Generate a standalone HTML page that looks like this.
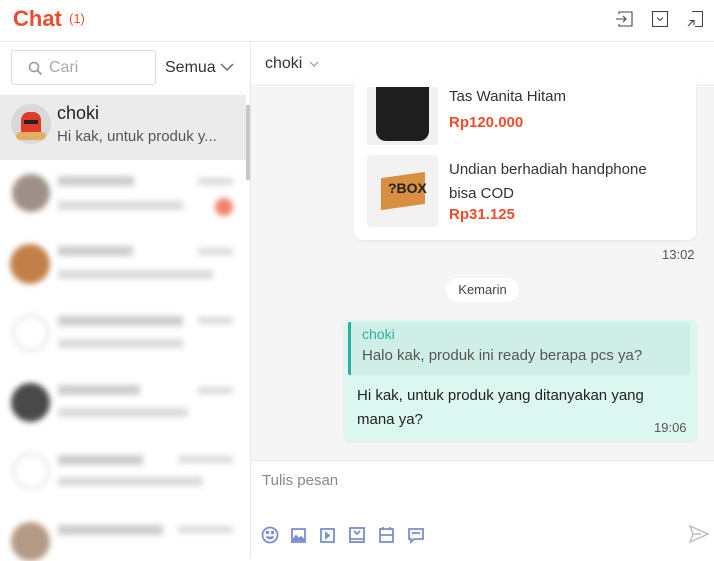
<!DOCTYPE html>
<html><head><meta charset="utf-8"><style>
*{box-sizing:border-box;margin:0;padding:0}
body{width:714px;height:558px;overflow:hidden;font-family:"Liberation Sans",sans-serif;background:#fff;position:relative;color:#333}
.a{position:absolute}
.blur{filter:blur(3px)}
</style></head><body>
<div class="a" style="left:0;top:0;width:714px;height:42px;border-bottom:1px solid #e8e8e8;background:#fff">
 <div class="a" style="left:13px;top:6px;font-size:22px;font-weight:bold;color:#ee4d2d">Chat</div>
 <div class="a" style="left:69px;top:11px;font-size:13px;color:#ee4d2d">(1)</div>
 <svg class="a" style="left:615px;top:11px" width="18" height="16" viewBox="0 0 18 16" fill="none" stroke="#444" stroke-width="1.1"><path d="M4 3V1h13v14H4v-2M1 8h10M8 5l3 3-3 3"/></svg>
 <svg class="a" style="left:652px;top:11px" width="16" height="16" viewBox="0 0 16 16" fill="none" stroke="#444" stroke-width="1.1"><rect x=".5" y=".5" width="15" height="15"/><path d="M5 6.5l3 3 3-3"/></svg>
 <svg class="a" style="left:687px;top:11px" width="16" height="16" viewBox="0 0 16 16" fill="none" stroke="#444" stroke-width="1.1"><path d="M5 .5h10.5v15H8M1 15l6-6M2.5 9.5h4.5v4.5"/></svg>
</div>
<!-- left -->
<div class="a" style="left:250px;top:43px;width:1px;height:515px;background:#e8e8e8"></div>
<div class="a" style="left:11px;top:50px;width:145px;height:35px;border:1px solid #ddd;border-radius:3px">
 <svg class="a" style="left:16px;top:10px" width="15" height="15" viewBox="0 0 15 15" fill="none" stroke="#999" stroke-width="1.6"><circle cx="6" cy="6" r="4.5"/><path d="M9.5 9.5l4 4"/></svg>
 <div class="a" style="left:37px;top:8px;font-size:16px;color:#aaa">Cari</div>
</div>
<div class="a" style="left:165px;top:59px;font-size:16px;color:#333">Semua</div>
<svg class="a" style="left:220px;top:63px" width="14" height="9" viewBox="0 0 14 9" fill="none" stroke="#666" stroke-width="1.4"><path d="M1 1l6 6 6-6"/></svg>
<div class="a" style="left:0;top:95px;width:246px;height:65px;background:#ebebeb"></div>
<div class="a" style="left:246px;top:105px;width:4px;height:75px;background:#c8c8c8"></div>
<div class="a" style="left:11px;top:104px;width:40px;height:40px;border-radius:50%;background:#d8d8d8;overflow:hidden">
 <div class="a" style="left:10px;top:8px;width:20px;height:26px;background:#e03a2a;border-radius:8px 8px 4px 4px"></div>
 <div class="a" style="left:13px;top:16px;width:14px;height:4px;background:#222"></div>
 <div class="a" style="left:5px;top:28px;width:30px;height:8px;background:#e0b060;border-radius:4px"></div>
</div>
<div class="a" style="left:57px;top:103px;font-size:18px;color:#222">choki</div>
<div class="a" style="left:57px;top:128px;font-size:15px;color:#555">Hi kak, untuk produk y...</div>
<div class="blur" style="opacity:.85">
 <div class="a" style="left:12px;top:174px;width:38px;height:38px;border-radius:50%;background:#8f7d73"></div>
 <div class="a" style="left:58px;top:176px;width:76px;height:10px;background:#c4c4c4"></div>
 <div class="a" style="left:58px;top:201px;width:125px;height:9px;background:#d4d4d4"></div>
 <div class="a" style="left:198px;top:178px;width:35px;height:7px;background:#d4d4d4"></div>
 <div class="a" style="left:215px;top:198px;width:18px;height:18px;border-radius:50%;background:#f26a50"></div>
 <div class="a" style="left:10px;top:244px;width:40px;height:40px;border-radius:50%;background:#b86a2a"></div>
 <div class="a" style="left:58px;top:246px;width:75px;height:10px;background:#c4c4c4"></div>
 <div class="a" style="left:58px;top:270px;width:155px;height:9px;background:#d4d4d4"></div>
 <div class="a" style="left:198px;top:248px;width:35px;height:7px;background:#d4d4d4"></div>
 <div class="a" style="left:12px;top:314px;width:38px;height:38px;border-radius:50%;border:3px solid #e6e6e6"></div>
 <div class="a" style="left:58px;top:316px;width:125px;height:10px;background:#c4c4c4"></div>
 <div class="a" style="left:58px;top:339px;width:125px;height:9px;background:#d4d4d4"></div>
 <div class="a" style="left:198px;top:317px;width:35px;height:7px;background:#d4d4d4"></div>
 <div class="a" style="left:11px;top:383px;width:39px;height:39px;border-radius:50%;background:#2a2a2a"></div>
 <div class="a" style="left:58px;top:385px;width:82px;height:10px;background:#c4c4c4"></div>
 <div class="a" style="left:58px;top:408px;width:130px;height:9px;background:#d4d4d4"></div>
 <div class="a" style="left:198px;top:387px;width:35px;height:7px;background:#d4d4d4"></div>
 <div class="a" style="left:12px;top:452px;width:38px;height:38px;border-radius:50%;border:3px solid #e6e6e6"></div>
 <div class="a" style="left:58px;top:455px;width:85px;height:10px;background:#c4c4c4"></div>
 <div class="a" style="left:58px;top:477px;width:145px;height:9px;background:#d4d4d4"></div>
 <div class="a" style="left:178px;top:456px;width:55px;height:7px;background:#d4d4d4"></div>
 <div class="a" style="left:11px;top:522px;width:39px;height:39px;border-radius:50%;background:#a88870"></div>
 <div class="a" style="left:58px;top:525px;width:105px;height:10px;background:#c4c4c4"></div>
 <div class="a" style="left:178px;top:526px;width:55px;height:7px;background:#d4d4d4"></div>
</div>
<!-- right -->
<div class="a" style="left:251px;top:43px;width:463px;height:43px;border-bottom:1px solid #eee;background:#fff">
 <div class="a" style="left:14px;top:12px;font-size:16px;color:#333">choki</div>
 <svg class="a" style="left:58px;top:18px" width="10" height="7" viewBox="0 0 10 7" fill="none" stroke="#999" stroke-width="1.2"><path d="M1 1l4 4 4-4"/></svg>
</div>
<div class="a" style="left:251px;top:87px;width:463px;height:373px;background:#f5f5f5"></div>
<div class="a" style="left:354px;top:70px;width:342px;height:170px;background:#fff;border-radius:8px;box-shadow:0 1px 2px rgba(0,0,0,.08)"></div>
<div class="a" style="left:367px;top:87px;width:71px;height:58px;background:#f0f0f0;overflow:hidden">
 <div class="a" style="left:9px;top:-10px;width:53px;height:64px;background:#1e1e1e;border-radius:6px 6px 10px 10px"></div>
</div>
<div class="a" style="left:449px;top:88px;font-size:15px;color:#333">Tas Wanita Hitam</div>
<div class="a" style="left:449px;top:114px;font-size:15px;font-weight:bold;color:#ee4d2d">Rp120.000</div>
<div class="a" style="left:367px;top:155px;width:71px;height:72px;background:#f2f2f2;border-radius:4px">
 <div class="a" style="left:14px;top:20px;width:44px;height:32px;background:#d89040;transform:skewY(-8deg)"></div>
 <div class="a" style="left:21px;top:25px;font-size:14px;font-weight:bold;color:#222">?BOX</div>
</div>
<div class="a" style="left:449px;top:158px;font-size:15px;color:#333;line-height:24px">Undian berhadiah handphone<br>bisa COD</div>
<div class="a" style="left:449px;top:206px;font-size:15px;font-weight:bold;color:#ee4d2d">Rp31.125</div>
<div class="a" style="left:662px;top:247px;font-size:13px;color:#555">13:02</div>
<div class="a" style="left:446px;top:278px;width:73px;height:24px;background:#fff;border-radius:12px;font-size:13px;color:#444;text-align:center;line-height:24px">Kemarin</div>
<div class="a" style="left:344px;top:320px;width:353px;height:121px;background:#dcf7ef;border-radius:6px;box-shadow:0 1px 2px rgba(0,0,0,.06)"></div>
<div class="a" style="left:348px;top:322px;width:342px;height:53px;background:#cfeee5;border-left:3px solid #2ab19e;border-radius:2px"></div>
<div class="a" style="left:362px;top:326px;font-size:14px;color:#2ab19e">choki</div>
<div class="a" style="left:362px;top:347px;font-size:15px;color:#555">Halo kak, produk ini ready berapa pcs ya?</div>
<div class="a" style="left:357px;top:384px;font-size:15px;color:#222;line-height:24px">Hi kak, untuk produk yang ditanyakan yang<br>mana ya?</div>
<div class="a" style="left:654px;top:420px;font-size:13px;color:#555">19:06</div>
<div class="a" style="left:251px;top:460px;width:463px;height:1px;background:#e8e8e8"></div>
<div class="a" style="left:262px;top:472px;font-size:15px;color:#888">Tulis pesan</div>
<svg class="a" style="left:260px;top:524px" width="170" height="22" viewBox="0 0 170 22" fill="none" stroke="#7b8fd0" stroke-width="1.8">
 <circle cx="10" cy="11" r="7.5"/><path d="M6.5 12.5q3.5 4 7 0" fill="#7b8fd0"/><circle cx="7.5" cy="8.5" r=".8" fill="#7b8fd0"/><circle cx="12.5" cy="8.5" r=".8" fill="#7b8fd0"/>
 <rect x="32" y="5" width="13" height="13"/><path d="M32 17l4-5 3 3 2-2 4 4" fill="#7b8fd0"/>
 <rect x="61" y="5" width="13" height="13"/><path d="M66 9v5l3-2.5z" fill="#7b8fd0"/>
 <rect x="90" y="4" width="14" height="14"/><path d="M90 15h14M94 7l3 3 3-3"/>
 <rect x="120" y="5" width="13" height="13"/><path d="M120 11h13M123 3v3M130 3v3"/>
 <path d="M149 5h14v10h-9l-3 3v-3h-2z"/><path d="M152 9h8" />
</svg>
<svg class="a" style="left:689px;top:525px" width="20" height="18" viewBox="0 0 20 18" fill="none" stroke="#bbb" stroke-width="1.4"><path d="M1 1l18 8-18 8 3-8z M4 9h8"/></svg>
</body></html>
